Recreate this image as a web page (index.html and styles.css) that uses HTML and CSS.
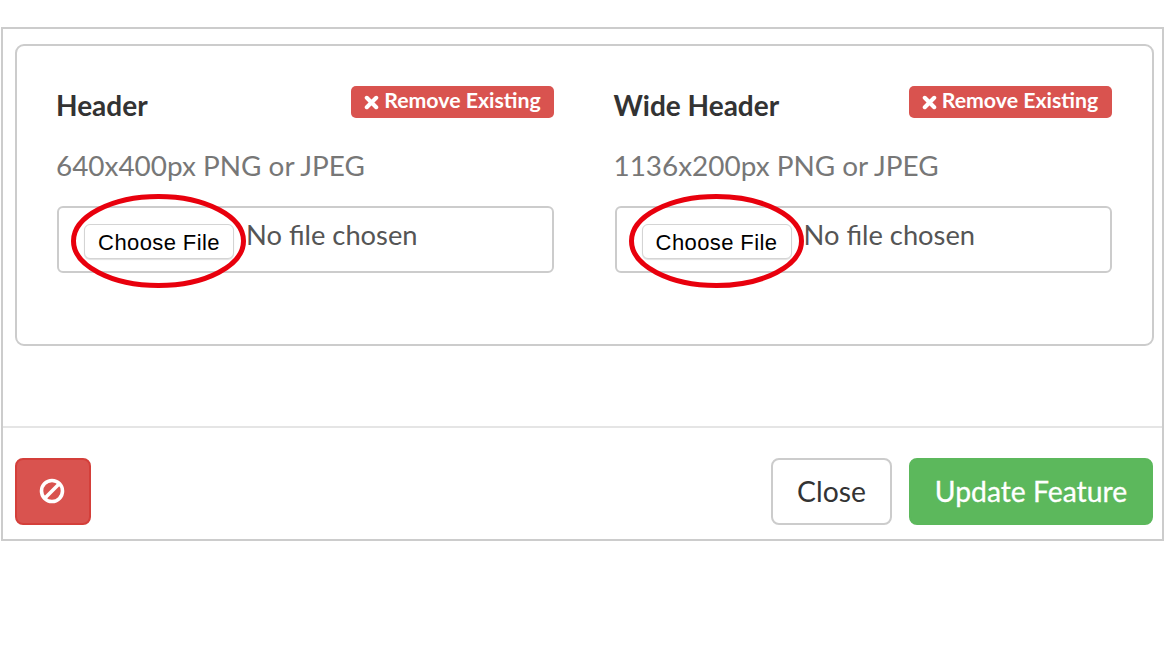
FILE: index.html
```html
<!DOCTYPE html>
<html lang="en">
<head>
    <meta charset="UTF-8">
    <meta name="viewport" content="width=device-width, initial-scale=1.0">
    <title>Update Feature</title>
    <link rel="stylesheet" href="styles.css">
</head>
<body>
    <div class="modal">
        <div class="modal-body">
            <div class="panel">
                <div class="upload">
                    <div class="upload-head">
                        <h3>Header</h3>
                        <button class="badge-remove">
                            <svg class="icon-x" viewBox="0 0 14 14"><path d="M2.6 2.6 11.4 11.4M11.4 2.6 2.6 11.4"/></svg>
                            Remove Existing
                        </button>
                    </div>
                    <p class="hint">640x400px PNG or JPEG</p>
                    <div class="file-box">
                        <button class="file-btn">Choose File</button>
                        <span class="file-name">No file chosen</span>
                        <svg class="circled" viewBox="0 0 175 94"><ellipse cx="87.5" cy="47" rx="85" ry="44.5"/></svg>
                    </div>
                </div>
                <div class="upload">
                    <div class="upload-head">
                        <h3>Wide Header</h3>
                        <button class="badge-remove">
                            <svg class="icon-x" viewBox="0 0 14 14"><path d="M2.6 2.6 11.4 11.4M11.4 2.6 2.6 11.4"/></svg>
                            Remove Existing
                        </button>
                    </div>
                    <p class="hint">1136x200px PNG or JPEG</p>
                    <div class="file-box">
                        <button class="file-btn">Choose File</button>
                        <span class="file-name">No file chosen</span>
                        <svg class="circled" viewBox="0 0 175 94"><ellipse cx="87.5" cy="47" rx="85" ry="44.5"/></svg>
                    </div>
                </div>
            </div>
        </div>
        <div class="modal-footer">
            <button class="btn btn-danger">
                <svg class="icon-ban" viewBox="0 0 26 26"><circle cx="13" cy="13" r="10.5"/><path d="M6 20 20 6"/></svg>
            </button>
            <div class="footer-right">
                <button class="btn btn-default">Close</button>
                <button class="btn btn-success">Update Feature</button>
            </div>
        </div>
    </div>
</body>
</html>
```

FILE: styles.css
```css
body {
    margin: 0;
    padding: 27px 1px 0 1px;
    background: #fff;
    font-family: Lato, "Open Sans", sans-serif;
    color: #333;
}
button {
    font-family: inherit;
    cursor: pointer;
}
.modal {
    border: 2px solid #ccc;
    height: 510px;
    display: flex;
    flex-direction: column;
}
.modal-body {
    height: 399px;
    padding: 15px 8px 0 12px;
    box-sizing: border-box;
    border-bottom: 2px solid #e5e5e5;
}
.panel {
    height: 302px;
    box-sizing: border-box;
    border: 2px solid #ccc;
    border-radius: 9px;
    padding: 40px 0 0 39px;
    display: grid;
    grid-template-columns: 498px 498px;
    column-gap: 59.5px;
}
.upload-head {
    display: flex;
    justify-content: space-between;
    align-items: flex-start;
    height: 32px;
}
.upload-head h3 {
    margin: 2px 0 0 0;
    font-size: 28px;
    line-height: 34px;
    font-weight: 700;
}
.badge-remove {
    height: 32px;
    width: 203px;
    border: none;
    border-radius: 5px;
    background: #d9534f;
    color: #fff;
    font-size: 21.3px;
    font-weight: 700;
    padding: 0 0 5px 0;
    display: flex;
    align-items: center;
    justify-content: center;
    gap: 5px;
}
.icon-x {
    width: 15px;
    height: 15px;
    margin-top: 5px;
    fill: none;
    stroke: #fff;
    stroke-width: 3.8;
    stroke-linecap: round;
}
.hint {
    margin: 30px 0 0 0;
    font-size: 27.9px;
    line-height: 34px;
    color: #777;
}
.file-box {
    position: relative;
    margin-top: 24px;
    margin-left: 1px;
    height: 67px;
    box-sizing: border-box;
    border: 2px solid #ccc;
    border-radius: 6px;
    padding: 16px 0 0 25px;
    display: flex;
    align-items: flex-start;
    gap: 12px;
}
.file-btn {
    width: 150px;
    height: 35px;
    padding: 2px 0 0 0;
    background: #fff;
    border: 1px solid #d4d4d4;
    border-radius: 6px;
    box-shadow: 0 1px 1px rgba(0, 0, 0, 0.12);
    font-family: "Liberation Sans", Arial, sans-serif;
    font-size: 22px;
    letter-spacing: 0.4px;
    color: #000;
}
.file-name {
    font-size: 27.3px;
    line-height: 34px;
    color: #555;
    margin-top: -6px;
}
/* красные обводки поверх кнопки */
.circled {
    position: absolute;
    left: 12px;
    top: -14px;
    width: 175px;
    height: 94px;
    fill: none;
    stroke: #e8000d;
    stroke-width: 5;
}
.modal-footer {
    flex: 1;
    display: flex;
    justify-content: space-between;
    align-items: flex-start;
    padding: 30px 9px 0 12px;
}
.footer-right {
    display: flex;
    gap: 17px;
}
.btn {
    height: 67px;
    box-sizing: border-box;
    border-radius: 8px;
    border: 2px solid transparent;
    font-size: 28.3px;
    padding: 0 0 2px 0;
    display: flex;
    align-items: center;
    justify-content: center;
}
.btn-danger {
    width: 76px;
    background: #d9534f;
    border-color: #d43f3a;
}
.icon-ban {
    width: 26px;
    height: 26px;
    margin-left: -2px;
    fill: none;
    stroke: #fff;
    stroke-width: 3.6;
}
.btn-default {
    width: 121px;
    background: #fff;
    border-color: #ccc;
    color: #333;
}
.btn-success {
    width: 244px;
    background: #5cb85c;
    border-color: #5cb85c;
    color: #fff;
    -webkit-text-stroke: 0.3px #fff;
}
```
